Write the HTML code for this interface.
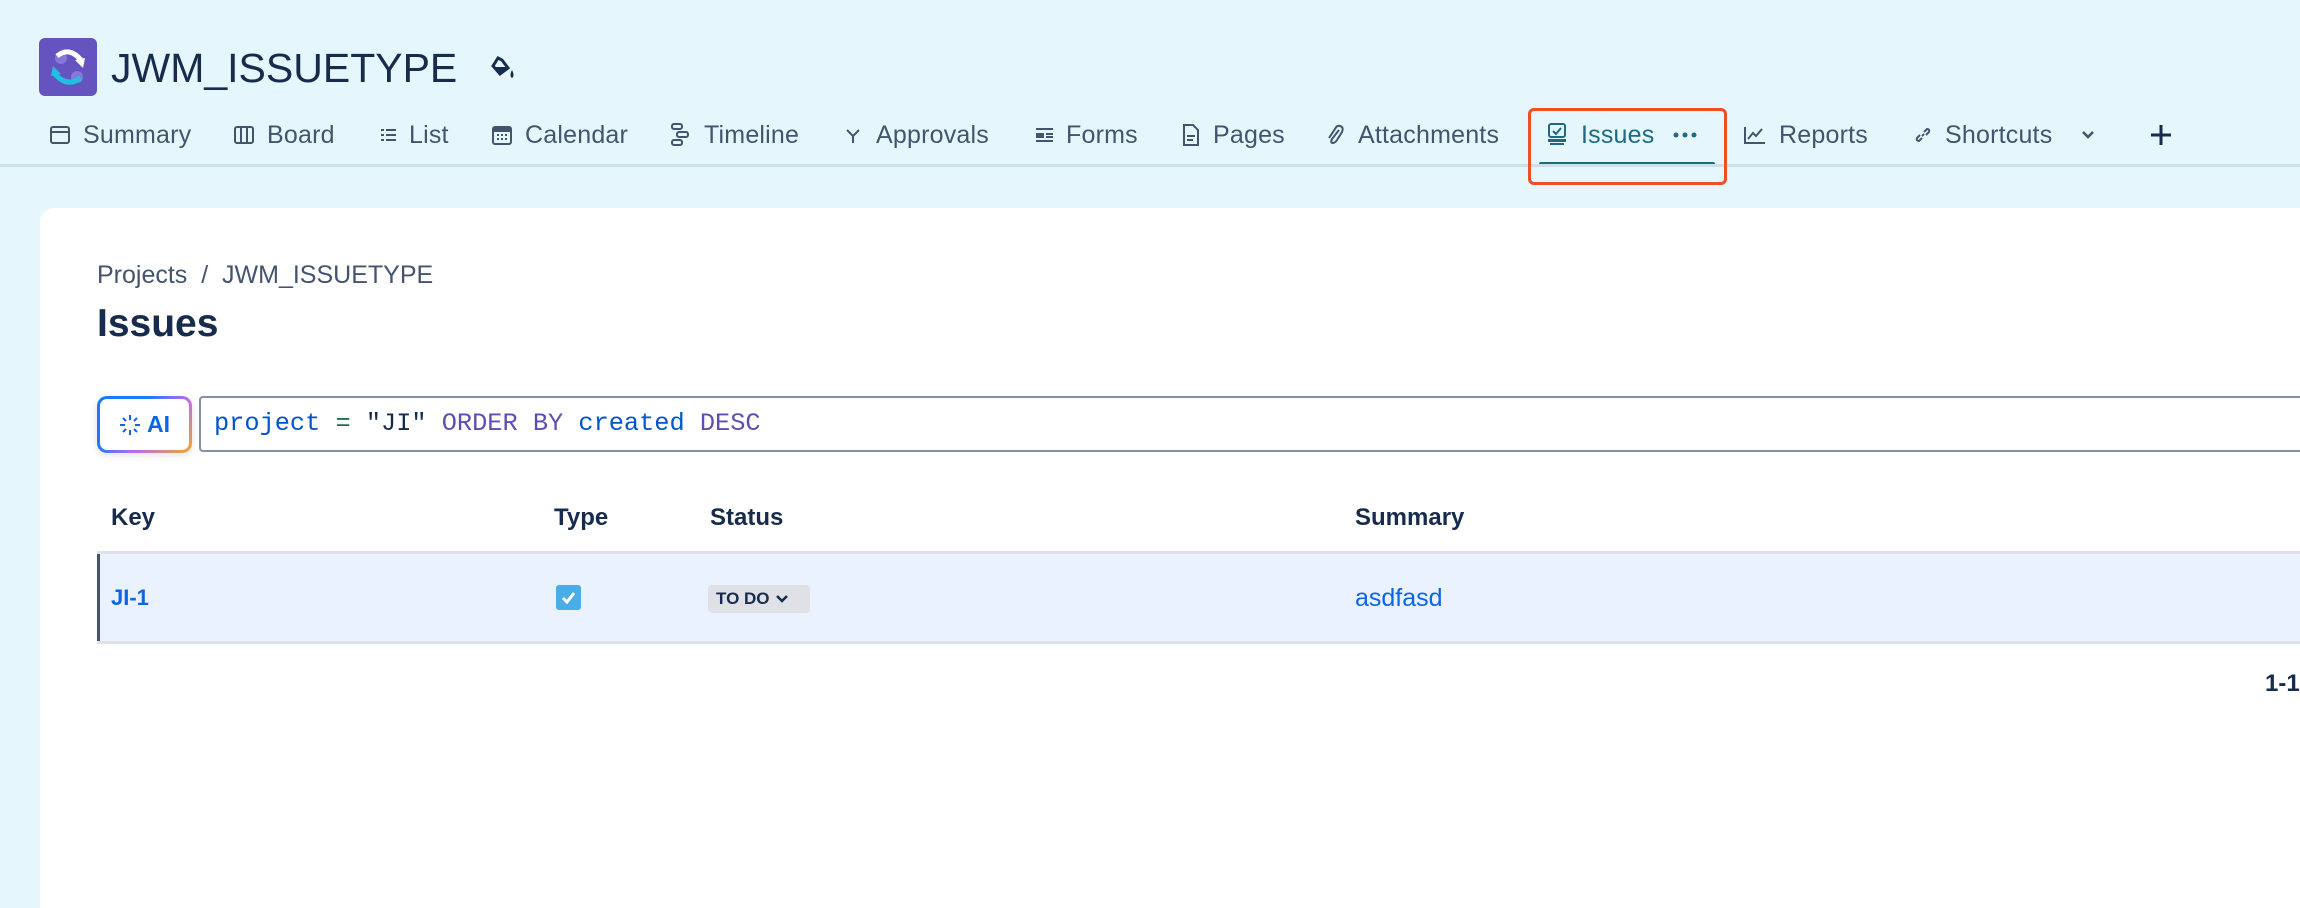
<!DOCTYPE html>
<html><head><meta charset="utf-8"><style>
*{margin:0;padding:0;box-sizing:border-box}
body{width:2300px;height:852px;overflow:hidden;background:#e5f6fd;font-family:"Liberation Sans",sans-serif;color:#172b4d;position:relative}
.abs{position:absolute}
.tab{position:absolute;top:121px;font-size:25px;color:#44546f;white-space:nowrap;line-height:28px;letter-spacing:0.2px}
.ic{position:absolute;top:124px}
.mono{font-family:"Liberation Mono",monospace}
</style></head><body>
<div class="abs" style="left:39px;top:38px;width:58px;height:58px;background:#6554c0;border-radius:6px;overflow:hidden">
<svg width="58" height="58" viewBox="0 0 58 58"><circle cx="22" cy="20" r="6" fill="#8777d9"/><circle cx="38" cy="39" r="6" fill="#8777d9"/>
<path d="M18 18 Q30 8 42 22" stroke="#fff" stroke-width="5" fill="none"/><path d="M36 22 L46 20 L44 30 Z" fill="#fff"/>
<path d="M42 40 Q28 50 16 36" stroke="#1fc0e0" stroke-width="5" fill="none"/><path d="M22 36 L12 38 L14 28 Z" fill="#1fc0e0"/></svg></div>
<div class="abs" style="left:111px;top:43px;font-size:41px;line-height:50px;color:#172b4d">JWM_ISSUETYPE</div>
<svg class="abs" style="left:490px;top:52px" width="30" height="30" viewBox="0 0 30 30"><path d="M8 6 L3 14 L10 22 L18 16 L12 8 Z" fill="none" stroke="#172b4d" stroke-width="3"/><path d="M4 15 L18 15 L10 22Z" fill="#172b4d"/><path d="M22 18 Q19 24 22 26 Q25 24 22 18Z" fill="#172b4d"/></svg>
<svg class="ic" style="left:50px;top:126px" width="20" height="18"><rect x="1" y="1" width="18" height="16" rx="2" fill="none" stroke="#44546f" stroke-width="2"/><line x1="1" y1="6" x2="19" y2="6" stroke="#44546f" stroke-width="2"/></svg>
<div class="tab" style="left:83px">Summary</div>
<svg class="ic" style="left:234px;top:126px" width="20" height="18"><rect x="1" y="1" width="18" height="16" rx="2" fill="none" stroke="#44546f" stroke-width="2"/><line x1="7" y1="1" x2="7" y2="17" stroke="#44546f" stroke-width="2"/><line x1="13" y1="1" x2="13" y2="17" stroke="#44546f" stroke-width="2"/></svg>
<div class="tab" style="left:267px">Board</div>
<svg class="ic" style="left:381px;top:127px" width="16" height="16"><g fill="#44546f"><rect x="0" y="2" width="3" height="2"/><rect x="5" y="2" width="10" height="2"/><rect x="0" y="7" width="3" height="2"/><rect x="5" y="7" width="10" height="2"/><rect x="0" y="12" width="3" height="2"/><rect x="5" y="12" width="10" height="2"/></g></svg>
<div class="tab" style="left:409px">List</div>
<svg class="ic" style="left:492px;top:124px" width="20" height="21"><rect x="1" y="3" width="18" height="17" rx="2" fill="none" stroke="#44546f" stroke-width="2"/><rect x="1" y="3" width="18" height="5" fill="#44546f"/><g fill="#44546f"><rect x="5" y="10" width="2" height="2"/><rect x="9" y="10" width="2" height="2"/><rect x="13" y="10" width="2" height="2"/><rect x="5" y="14" width="2" height="2"/><rect x="9" y="14" width="2" height="2"/><rect x="13" y="14" width="2" height="2"/></g></svg>
<div class="tab" style="left:525px">Calendar</div>
<svg class="ic" style="left:671px;top:123px" width="18" height="24"><g fill="none" stroke="#44546f" stroke-width="2"><rect x="1" y="1" width="10" height="5" rx="2"/><rect x="6" y="9" width="11" height="5" rx="2"/><rect x="1" y="17" width="10" height="5" rx="2"/></g></svg>
<div class="tab" style="left:704px">Timeline</div>
<svg class="ic" style="left:845px;top:128px" width="16" height="16"><path d="M2 2 L8 8 M14 2 L8 8 L8 15" stroke="#44546f" stroke-width="2" fill="none"/></svg>
<div class="tab" style="left:876px">Approvals</div>
<svg class="ic" style="left:1036px;top:127px" width="18" height="16"><g fill="#44546f"><rect x="0" y="1" width="17" height="2"/><rect x="0" y="6" width="8" height="5"/><rect x="10" y="6" width="7" height="2"/><rect x="10" y="9" width="7" height="2"/><rect x="0" y="13" width="17" height="2"/></g></svg>
<div class="tab" style="left:1066px">Forms</div>
<svg class="ic" style="left:1183px;top:124px" width="16" height="22"><path d="M1 1 H10 L15 6 V21 H1 Z" fill="none" stroke="#44546f" stroke-width="2"/><line x1="4" y1="12" x2="12" y2="12" stroke="#44546f" stroke-width="2"/><line x1="4" y1="16" x2="10" y2="16" stroke="#44546f" stroke-width="2"/></svg>
<div class="tab" style="left:1213px">Pages</div>
<svg class="ic" style="left:1326px;top:124px" width="18" height="22"><path d="M13 6 L6 15 Q4 19 7 19 Q9 19 11 16 L16 8 Q18 3 14 2 Q11 1 9 5 L3 14" fill="none" stroke="#44546f" stroke-width="2"/></svg>
<div class="tab" style="left:1358px">Attachments</div>
<svg class="ic" style="left:1547px;top:123px" width="20" height="24"><rect x="2" y="1" width="16" height="13" rx="2" fill="none" stroke="#1d6a85" stroke-width="2"/><path d="M6 8 L9 11 L14 5" stroke="#1d6a85" stroke-width="2" fill="none"/><rect x="1" y="16" width="18" height="3" fill="#1d6a85"/><rect x="3" y="20" width="14" height="2" fill="#1d6a85"/></svg>
<div class="tab" style="left:1581px;color:#1d6a85">Issues</div>
<svg class="abs" style="left:1673px;top:132px" width="24" height="6"><g fill="#1d6a85"><circle cx="3" cy="3" r="2.5"/><circle cx="12" cy="3" r="2.5"/><circle cx="21" cy="3" r="2.5"/></g></svg>
<div class="abs" style="left:1539px;top:162px;width:176px;height:4px;background:#1d6a85;border-radius:2px"></div>
<svg class="ic" style="left:1744px;top:126px" width="22" height="18"><path d="M1 1 V17 H21" stroke="#44546f" stroke-width="2" fill="none"/><path d="M4 13 L9 7 L12 10 L18 3" stroke="#44546f" stroke-width="2" fill="none"/></svg>
<div class="tab" style="left:1779px">Reports</div>
<svg class="ic" style="left:1915px;top:127px" width="16" height="16"><path d="M7 9 L9 7 M5 8 L2 11 Q1 14 4 14 L7 11 M11 8 L14 5 Q15 2 12 2 L9 5" stroke="#44546f" stroke-width="2" fill="none"/></svg>
<div class="tab" style="left:1945px">Shortcuts</div>
<svg class="ic" style="left:2081px;top:130px" width="14" height="10"><path d="M2 2 L7 7 L12 2" stroke="#44546f" stroke-width="2.5" fill="none"/></svg>
<svg class="ic" style="left:2150px;top:124px" width="22" height="22"><path d="M11 1 V21 M1 11 H21" stroke="#172b4d" stroke-width="3"/></svg>
<div class="abs" style="left:0;top:164px;width:2300px;height:3px;background:#cde0e7"></div>
<div class="abs" style="left:1528px;top:108px;width:199px;height:77px;border:3px solid #f04e23;border-radius:6px"></div>
<div class="abs" style="left:40px;top:208px;width:2300px;height:700px;background:#fff;border-radius:14px 0 0 0"></div>
<div class="abs" style="left:97px;top:261px;font-size:25px;color:#44546f;line-height:28px">Projects &nbsp;/ &nbsp;JWM_ISSUETYPE</div>
<div class="abs" style="left:97px;top:300px;font-size:39px;font-weight:bold;color:#172b4d;line-height:48px">Issues</div>
<div class="abs" style="left:97px;top:396px;width:95px;height:57px;border-radius:10px;background:linear-gradient(135deg,#1d7afc 0%,#1d7afc 35%,#b56cf0 60%,#f5a623 100%);padding:3px;box-shadow:0 2px 8px rgba(0,0,0,.12)">
<div style="width:100%;height:100%;background:#fff;border-radius:7px;display:flex;align-items:center;justify-content:center;color:#0c66e4;font-size:23px;font-weight:bold">
<svg width="22" height="22" viewBox="0 0 22 22" style="margin-right:6px"><g stroke="#0c66e4" stroke-width="2"><path d="M11 1V6M11 16V21M1 11H6M16 11H21M4 4L7 7M15 15L18 18M18 4L15 7M7 15L4 18"/></g></svg>AI</div></div>
<div class="abs" style="left:199px;top:396px;width:2120px;height:56px;border:2px solid #8590a2;border-radius:4px"></div>
<div class="abs mono" style="left:214px;top:408px;font-size:25.3px;line-height:32px;white-space:pre"><span style="color:#0055cc">project</span> <span style="color:#216e4e">=</span> <span style="color:#172b4d">"JI"</span> <span style="color:#5e4db2">ORDER BY</span> <span style="color:#0055cc">created</span> <span style="color:#5e4db2">DESC</span></div>
<div class="abs" style="left:111px;top:504px;font-size:24px;font-weight:bold;color:#172b4d;line-height:28px">Key</div>
<div class="abs" style="left:554px;top:504px;font-size:24px;font-weight:bold;line-height:28px">Type</div>
<div class="abs" style="left:710px;top:504px;font-size:24px;font-weight:bold;line-height:28px">Status</div>
<div class="abs" style="left:1355px;top:504px;font-size:24px;font-weight:bold;line-height:28px">Summary</div>
<div class="abs" style="left:97px;top:551px;width:2210px;height:93px;background:#e9f2fe;border-top:3px solid #dfe1e6;border-bottom:3px solid #dfe1e6"></div>
<div class="abs" style="left:97px;top:554px;width:3px;height:87px;background:#44546f"></div>
<div class="abs" style="left:111px;top:584px;font-size:22px;font-weight:bold;color:#0c66e4;line-height:28px">JI-1</div>
<div class="abs" style="left:556px;top:585px;width:25px;height:25px;background:#4bade8;border-radius:3px"><svg width="25" height="25"><path d="M7 13 L11 17 L18 8" stroke="#fff" stroke-width="3" fill="none"/></svg></div>
<div class="abs" style="left:708px;top:585px;width:102px;height:28px;background:#dfe1e6;border-radius:4px;font-size:17px;font-weight:bold;color:#172b4d;line-height:28px;padding-left:8px">TO DO<svg width="14" height="10" style="margin-left:5px"><path d="M2 2 L7 7 L12 2" stroke="#172b4d" stroke-width="2.5" fill="none"/></svg></div>
<div class="abs" style="left:1355px;top:584px;font-size:25px;color:#0c66e4;line-height:28px">asdfasd</div>
<div class="abs" style="left:2265px;top:670px;font-size:24px;font-weight:bold;line-height:28px">1-1</div>
</body></html>
